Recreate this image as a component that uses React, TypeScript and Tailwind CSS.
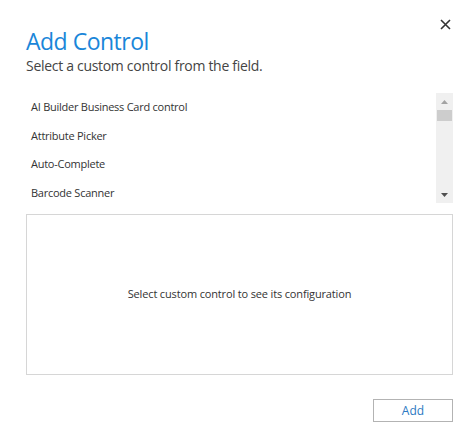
import React from 'react';

const controls = [
  'AI Builder Business Card control',
  'Attribute Picker',
  'Auto-Complete',
  'Barcode Scanner',
];

export default function App() {
  return (
    <div className="w-[474px] h-[433px] bg-white relative overflow-hidden font-['Open_Sans',sans-serif] text-[#333]">
      <button className="absolute top-[17px] right-[22px] w-[14px] h-[14px] flex items-center justify-center" aria-label="Close">
        <svg width="11" height="11" viewBox="0 0 11 11">
          <path d="M1 1L10 10M10 1L1 10" stroke="#333" strokeWidth="1.6" />
        </svg>
      </button>

      <div className="pl-[26px] pr-[21px] pt-[26px]">
        <h1 className="text-[23px] leading-[30px] text-[#1a86d9] tracking-[-0.5px]">Add Control</h1>
        <p className="text-[14px] leading-[20px] text-[#444] tracking-[-0.3px]">Select a custom control from the field.</p>

        <div className="mt-[17px] h-[110px] flex">
          <ul className="flex-1 pl-[5px] text-[11px] text-[#333]">
            {controls.map((c) => (
              <li key={c} className="h-[28.5px] flex items-center tracking-[-0.25px]">
                {c}
              </li>
            ))}
          </ul>
          <div className="w-[17px] bg-[#f0f0f0] flex flex-col items-center">
            <div className="h-[17px] flex items-center justify-center">
              <svg width="7" height="4" viewBox="0 0 7 4"><path d="M3.5 0L7 4H0Z" fill="#a3a3a3" /></svg>
            </div>
            <div className="w-[15px] h-[11px] bg-[#cdcdcd]" />
            <div className="flex-1" />
            <div className="h-[17px] flex items-center justify-center">
              <svg width="7" height="4" viewBox="0 0 7 4"><path d="M0 0H7L3.5 4Z" fill="#505050" /></svg>
            </div>
          </div>
        </div>

        <div className="mt-[11px] h-[161px] border border-[#d6d6d6] flex items-center justify-center text-[11px] text-[#333] tracking-[-0.15px]">
          Select custom control to see its configuration
        </div>

        <div className="mt-[24px] flex justify-end">
          <button className="w-[80px] h-[23px] border border-[#b3b3b3] text-[12px] text-[#2b79c2] bg-white">
            Add
          </button>
        </div>
      </div>
    </div>
  );
}
